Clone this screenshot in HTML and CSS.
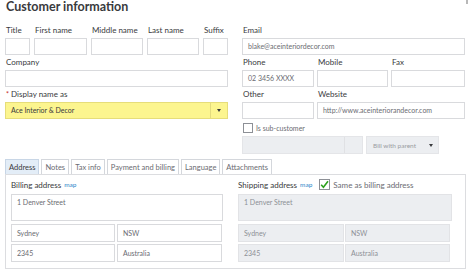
FILE: index.html
```html
<!DOCTYPE html>
<html lang="en">
<head>
  <meta charset="UTF-8" />
  <meta name="viewport" content="width=device-width, initial-scale=1" />
  <title>Customer information</title>
  <link rel="stylesheet" href="styles.css">
</head>
<body>
  <div class="page">
    <div class="header">
      <h1>Customer information</h1>
      <span class="corner"></span>
    </div>

    <div class="top">
      <!-- left column: name, company, display name -->
      <div class="col">
        <div class="names">
          <label>Title</label>
          <label>First name</label>
          <label>Middle name</label>
          <label>Last name</label>
          <label>Suffix</label>
          <div class="field"></div>
          <div class="field"></div>
          <div class="field"></div>
          <div class="field"></div>
          <div class="field"></div>
        </div>

        <label class="lbl">Company</label>
        <div class="field"></div>

        <label class="lbl"><span class="req">*</span> Display name as</label>
        <div class="select yellow">
          <span class="value">Ace Interior &amp; Decor</span>
          <span class="drop"><span class="caret"></span></span>
        </div>
      </div>

      <!-- right column: contact details -->
      <div class="col">
        <label class="lbl">Email</label>
        <div class="field">blake@aceinteriordecor.com</div>

        <div class="phones">
          <label>Phone</label>
          <label>Mobile</label>
          <label>Fax</label>
          <div class="field">02 3456 XXXX</div>
          <div class="field"></div>
          <div class="field"></div>
        </div>

        <div class="web">
          <label>Other</label>
          <label>Website</label>
          <div class="field"></div>
          <div class="field">http://www.aceinteriorandecor.com</div>
        </div>

        <div class="check-row">
          <span class="box"></span>
          <span>Is sub-customer</span>
        </div>

        <div class="sub-row">
          <div class="parent">
            <span></span>
            <span class="part"></span>
          </div>
          <div class="bill">
            <span>Bill with parent</span>
            <span class="caret"></span>
          </div>
        </div>
      </div>
    </div>

    <div class="tabs">
      <span class="tab active">Address</span>
      <span class="tab">Notes</span>
      <span class="tab">Tax info</span>
      <span class="tab">Payment and billing</span>
      <span class="tab">Language</span>
      <span class="tab">Attachments</span>
    </div>

    <div class="panel">
      <div class="addr">
        <div class="addr-head">Billing address <a href="#">map</a></div>
        <div class="field street">1 Denver Street</div>
        <div class="pair">
          <div class="field">Sydney</div>
          <div class="field">NSW</div>
        </div>
        <div class="pair">
          <div class="field">2345</div>
          <div class="field">Australia</div>
        </div>
      </div>

      <div class="addr off">
        <div class="addr-head">
          Shipping address <a href="#">map</a>
          <span class="tick">
            <svg width="9" height="9" viewBox="0 0 9 9"><path d="M1.2 4.8 L3.4 7.2 L8 1.2" fill="none" stroke="#2ca01c" stroke-width="1.6"/></svg>
          </span>
          <span class="same">Same as billing address</span>
        </div>
        <div class="field street">1 Denver Street</div>
        <div class="pair">
          <div class="field">Sydney</div>
          <div class="field">NSW</div>
        </div>
        <div class="pair">
          <div class="field">2345</div>
          <div class="field">Australia</div>
        </div>
      </div>
    </div>
  </div>
</body>
</html>
```

FILE: styles.css
```css
body {
  margin: 0;
  background: #fff;
  font-family: Lato, "Open Sans", sans-serif;
  color: #393a3d;
}
.page {
  width: 460px;
  padding: 0 0 0 5px;
}
.header {
  height: 23px;
  display: flex;
  justify-content: space-between;
  align-items: flex-start;
}
h1 {
  margin: 0;
  padding-left: 1px;
  font-size: 12.5px;
  font-weight: 700;
  line-height: 14px;
  color: #393a3d;
}
.corner {
  width: 2px;
  height: 4px;
  margin-right: -3px;
  background: #b8b8b8;
}
.top {
  display: grid;
  grid-template-columns: 223px 223px;
  column-gap: 14px;
}
label, .lbl {
  display: block;
  font-size: 8px;
  line-height: 15px;
  color: #393a3d;
  padding-left: 1px;
}
.req {
  color: #c4291c;
  font-size: 7px;
  vertical-align: top;
}
.field {
  box-sizing: border-box;
  height: 17px;
  border: 1px solid #d9dadd;
  background: #fff;
  font-size: 7px;
  line-height: 15px;
  padding-left: 5px;
  color: #6b6c72;
  white-space: nowrap;
  overflow: hidden;
}
.names {
  display: grid;
  grid-template-columns: 25px 53px 52px 52px 25px;
  column-gap: 4px;
}
.select {
  box-sizing: border-box;
  height: 17px;
  display: flex;
  border: 1px solid #e6dd7a;
  font-size: 7px;
  line-height: 15px;
  color: #393a3d;
}
.yellow {
  background: #fcf58f;
}
.select .value {
  flex: 1;
  padding-left: 5px;
}
.select .drop {
  width: 16px;
  border-left: 1px solid #e3db7e;
  display: flex;
  align-items: center;
  justify-content: center;
}
.caret {
  width: 0;
  height: 0;
  border-left: 2px solid transparent;
  border-right: 2px solid transparent;
  border-top: 3px solid #393a3d;
}
.phones {
  display: grid;
  grid-template-columns: 72px 71px 74px;
  column-gap: 3px;
}
.web {
  display: grid;
  grid-template-columns: 72px 148px;
  column-gap: 3px;
}
.check-row {
  display: flex;
  align-items: center;
  gap: 3px;
  margin-top: 3px;
  height: 11px;
  font-size: 7px;
  color: #6b6c72;
}
.check-row .box {
  width: 10px;
  height: 10px;
  margin-left: 1px;
  box-sizing: border-box;
  border: 1px solid #8d9096;
  background: #fff;
}
.sub-row {
  display: flex;
  gap: 3px;
  margin-top: 3px;
  height: 18px;
}
.parent {
  width: 121px;
  display: flex;
  background: #eceef1;
  border: 1px solid #e4e5e8;
  box-sizing: border-box;
}
.parent span:first-child {
  flex: 1;
}
.parent .part {
  width: 17px;
  border-left: 1px solid #e0e1e4;
}
.bill {
  width: 73px;
  box-sizing: border-box;
  display: flex;
  align-items: center;
  justify-content: space-between;
  padding: 0 5px 0 6px;
  background: #eceef1;
  border: 1px solid #e4e5e8;
  font-size: 6.5px;
  color: #9a9ca1;
}
.tabs {
  display: flex;
  gap: 2px;
  margin-top: 5px;
  height: 15px;
}
.tab {
  box-sizing: border-box;
  height: 15px;
  padding: 0 3px;
  border: 1px solid #d4d7dc;
  border-bottom: none;
  font-size: 7.5px;
  line-height: 15px;
  color: #6b6c72;
  background: #fff;
}
.tab.active {
  background: #e3edf7;
  border-color: #c8d6e6;
  color: #393a3d;
}
.panel {
  box-sizing: border-box;
  width: 461px;
  height: 95px;
  border: 1px solid #dcdde0;
  padding: 0 0 0 5px;
  display: grid;
  grid-template-columns: 212px 214px;
  column-gap: 15px;
}
.addr-head {
  height: 19px;
  display: flex;
  align-items: center;
  gap: 3px;
  font-size: 8px;
  color: #393a3d;
}
.addr-head a {
  color: #2c86c9;
  font-size: 6.5px;
  text-decoration: none;
}
.tick {
  box-sizing: border-box;
  width: 11px;
  height: 11px;
  margin-left: 4px;
  border: 1px solid #8d9096;
  background: #fff;
  display: flex;
  align-items: center;
  justify-content: center;
}
.same {
  color: #6b6c72;
}
.street {
  height: 27px;
  line-height: 15px;
}
.pair {
  display: grid;
  grid-template-columns: 104px 105px;
  column-gap: 2px;
  margin-top: 3px;
}
.pair + .pair {
  margin-top: 2px;
}
.pair .field {
  height: 18px;
  line-height: 16px;
}
.addr.off .field {
  background: #eceef1;
  border-color: #e2e3e6;
  color: #8d9096;
}
.addr.off .pair {
  grid-template-columns: 106px 105px;
  column-gap: 1px;
}
```
